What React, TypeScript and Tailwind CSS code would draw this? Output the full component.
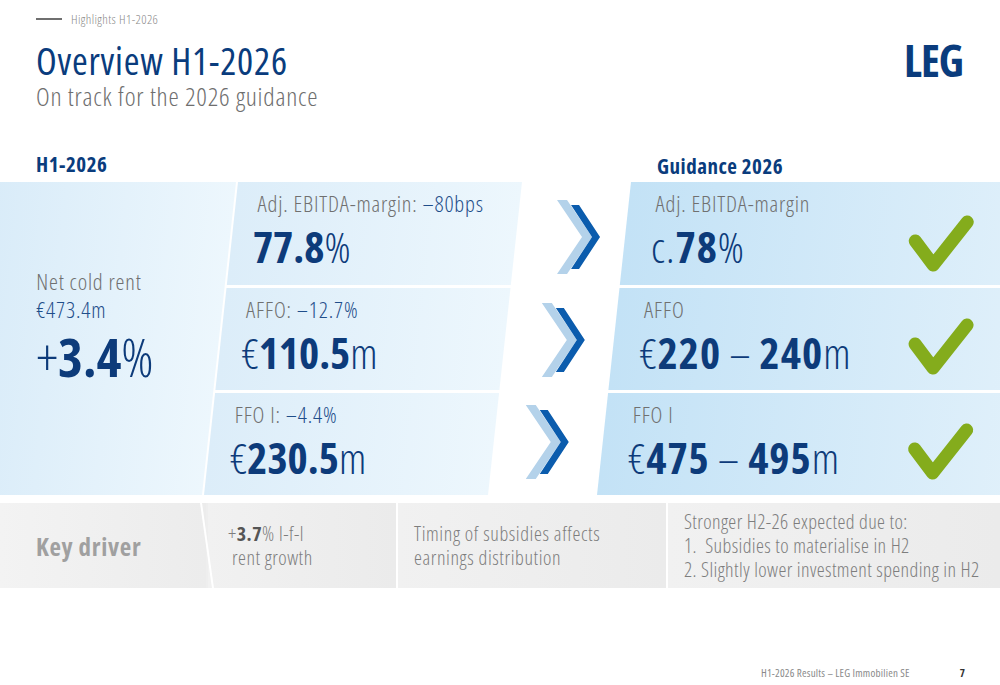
import React from 'react';

type Row = {
  h: string;
  label: React.ReactNode;
  value: React.ReactNode;
  gLabel: string;
  gValue: React.ReactNode;
  arrow: string;
  gText: string;
  check: string;
};

const rows: Row[] = [
  {
    h: 'h-[103px]',
    label: (
      <>
        Adj. EBITDA-margin: <span className="text-[#1f4e8a]">–80bps</span>
      </>
    ),
    value: (
      <>
        <b className="font-bold">77.8</b>%
      </>
    ),
    gLabel: 'Adj. EBITDA-margin',
    gValue: (
      <>
        c.<b className="font-bold">78</b>%
      </>
    ),
    arrow: 'mt-[18px] ml-[41px]',
    gText: 'w-[276px]',
    check: 'mt-[28px]',
  },
  {
    h: 'h-[102px]',
    label: (
      <>
        AFFO: <span className="text-[#1f4e8a]">–12.7%</span>
      </>
    ),
    value: (
      <>
        €<b className="font-bold">110.5</b>m
      </>
    ),
    gLabel: 'AFFO',
    gValue: (
      <>
        €<b className="font-bold">220</b>
        <span className="mx-[8px]">–</span>
        <b className="font-bold">240</b>m
      </>
    ),
    arrow: 'mt-[15px] ml-[37px]',
    gText: 'w-[287px]',
    check: 'mt-[25px]',
  },
  {
    h: 'h-[102px]',
    label: (
      <>
        FFO I: <span className="text-[#1f4e8a]">–4.4%</span>
      </>
    ),
    value: (
      <>
        €<b className="font-bold">230.5</b>m
      </>
    ),
    gLabel: 'FFO I',
    gValue: (
      <>
        €<b className="font-bold">475</b>
        <span className="mx-[8px]">–</span>
        <b className="font-bold">495</b>m
      </>
    ),
    arrow: 'mt-[12px] ml-[32px]',
    gText: 'w-[298px]',
    check: 'mt-[25px]',
  },
];

function Chevron() {
  return (
    <svg width="44" height="74" viewBox="0 0 44 74">
      <polygon points="0,0 10,0 35,37 10,74 0,74 25,37" fill="#b4d2ea" />
      <polygon points="14,5 22,5 43,37 22,69 14,69 35,37" fill="#0b5cad" />
    </svg>
  );
}

function Check() {
  return (
    <svg width="76" height="68" viewBox="0 0 76 68">
      <polyline
        points="15,31 33,55 67,12"
        fill="none"
        stroke="#84ac1c"
        strokeWidth="13"
        strokeLinecap="round"
        strokeLinejoin="round"
      />
    </svg>
  );
}

export default function App() {
  return (
    <div className="w-[1000px] h-[685px] bg-white overflow-hidden flex flex-col font-['Open_Sans',sans-serif] font-light [font-stretch:75%]">
      {/* Breadcrumb */}
      <div className="h-[38px] shrink-0 flex items-center pl-[36px] gap-[9px]">
        <div className="w-[26px] h-[2px] bg-[#6f6f6f]" />
        <span className="text-[13px] leading-[14px] tracking-[0.4px] text-[#8a8a8a]">Highlights H1-2026</span>
      </div>

      {/* Title + logo */}
      <div className="h-[102px] shrink-0 flex justify-between pl-[36px] pr-[37px]">
        <div>
          <h1 className="text-[38px] leading-[44px] font-normal tracking-[0.75px] text-[#0a3c7d]">Overview H1-2026</h1>
          <p className="text-[26px] leading-[28px] tracking-[0.75px] text-[#6e6e6e]">On track for the 2026 guidance</p>
        </div>
        <div className="text-[44px] leading-[44px] font-bold text-[#0a3c7d] tracking-[-1px]">LEG</div>
      </div>

      {/* Section headings */}
      <div className="h-[42px] shrink-0 flex pt-[12px] text-[21px] leading-[24px] font-bold tracking-[0.5px] text-[#0a3c7d]">
        <span className="w-[657px] pl-[36px]">H1-2026</span>
        <span className="mt-[2px]">Guidance 2026</span>
      </div>

      {/* Main skewed block */}
      <div className="h-[313px] shrink-0 overflow-hidden">
        <div className="flex h-full w-[1140px] ml-[-40px] origin-top-left skew-x-[-6.2deg]">
          <div className="w-[276px] shrink-0 bg-linear-to-r from-[#d6eaf8] to-[#edf7fd] pl-[92px] pt-[86px]">
            <div className="skew-x-[6.2deg] whitespace-nowrap">
              <div className="text-[22.5px] leading-[28px] tracking-[0.8px] text-[#707070]">Net cold rent</div>
              <div className="text-[22.5px] leading-[28px] tracking-[0.8px] text-[#1f4e8a]">€473.4m</div>
              <div className="mt-[5px] text-[53px] leading-[56px] text-[#0d3b7a]">
                +<b className="font-bold">3.4</b>%
              </div>
            </div>
          </div>
          <div className="w-[2px] shrink-0" />
          <div className="w-[862px] shrink-0 flex flex-col gap-[3px]">
            {rows.map((r, i) => (
              <div key={i} className={`${r.h} flex`}>
                <div className="w-[284px] shrink-0 bg-linear-to-r from-[#dcedf9] to-[#edf7fd] pl-[22px] pt-[10px] whitespace-nowrap">
                  <div className="skew-x-[6.2deg] text-[22.5px] leading-[24px] tracking-[0.8px] text-[#707070]">{r.label}</div>
                  <div className="mt-[7px] skew-x-[6.2deg] text-[43px] leading-[48px] text-[#0d3b7a]">{r.value}</div>
                </div>
                <div className="w-[109px] shrink-0">
                  <div className={`${r.arrow} w-[44px] skew-x-[6.2deg]`}>
                    <Chevron />
                  </div>
                </div>
                <div className="flex-1 flex bg-linear-to-r from-[#c3e2f6] to-[#e4f2fb]">
                  <div className={`${r.gText} shrink-0 pl-[27px] pt-[10px] whitespace-nowrap`}>
                    <div className="skew-x-[6.2deg] text-[22.5px] leading-[24px] tracking-[0.8px] text-[#707070]">{r.gLabel}</div>
                    <div className="mt-[7px] skew-x-[6.2deg] text-[43px] leading-[48px] tracking-[1px] text-[#0d3b7a]">{r.gValue}</div>
                  </div>
                  <div className={`${r.check} w-[76px] h-[68px] skew-x-[6.2deg]`}>
                    <Check />
                  </div>
                </div>
              </div>
            ))}
          </div>
        </div>
      </div>

      {/* Key driver row */}
      <div className="mt-[8px] h-[85px] shrink-0 flex bg-[#eeeeee]">
        <div className="w-[206px] shrink-0 flex items-center pl-[36px] bg-linear-to-r from-[#f3f3f3] to-[#ececec]">
          <span className="text-[25px] leading-[30px] font-bold tracking-[0.7px] text-[#a0a0a0]">Key driver</span>
        </div>
        <div className="w-[2px] shrink-0 bg-white skew-x-[8deg]" />
        <div className="w-[188px] shrink-0 flex flex-col justify-center pl-[20px] text-[20px] leading-[24px] tracking-[0.5px] text-[#7d7d7d] bg-linear-to-r from-[#f1f1f1] to-[#ebebeb]">
          <span>
            +<b className="font-bold text-[#555555]">3.7</b>% l-f-l
          </span>
          <span className="pl-[4px]">rent growth</span>
        </div>
        <div className="w-[2px] shrink-0 bg-white" />
        <div className="w-[268px] shrink-0 flex flex-col justify-center pl-[16px] text-[20px] leading-[24px] tracking-[0.6px] text-[#7d7d7d] bg-linear-to-r from-[#f1f1f1] to-[#ebebeb]">
          <span>Timing of subsidies affects</span>
          <span>earnings distribution</span>
        </div>
        <div className="w-[2px] shrink-0 bg-white" />
        <div className="flex-1 flex flex-col justify-center pl-[16px] text-[20px] leading-[24px] tracking-[0.4px] text-[#7d7d7d] whitespace-pre bg-linear-to-r from-[#f1f1f1] to-[#ebebeb]">
          <span>Stronger H2-26 expected due to:</span>
          <span>1.  Subsidies to materialise in H2</span>
          <span>2. Slightly lower investment spending in H2</span>
        </div>
      </div>

      <div className="flex-1" />

      {/* Footer */}
      <div className="h-[24px] shrink-0 flex items-center justify-end pr-[35px] gap-[50px] text-[11px] leading-[12px] font-normal tracking-[0.2px]">
        <span className="text-[#8a8a8a]">H1-2026 Results – LEG Immobilien SE</span>
        <span className="font-bold text-[#333333]">7</span>
      </div>
    </div>
  );
}
